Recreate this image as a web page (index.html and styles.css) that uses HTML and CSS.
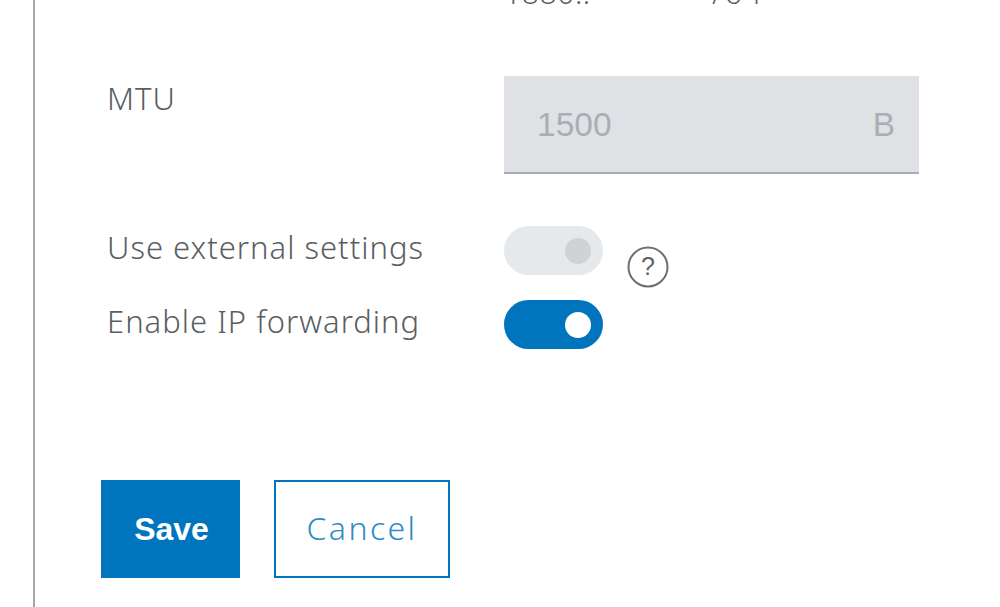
FILE: index.html
```html
<!DOCTYPE html>
<html lang="en">
<head>
<meta charset="utf-8">
<title>Network settings</title>
<link rel="stylesheet" href="styles.css">
</head>
<body>
<main class="panel">
  <div class="clip-row">
    <span class="addr">1880::</span>
    <span class="prefix">/64</span>
  </div>
  <div class="form-row mtu-row">
    <label class="label">MTU</label>
    <div class="input">
      <span>1500</span>
      <span>B</span>
    </div>
  </div>
  <div class="form-row toggle-row first-toggle">
    <span class="label">Use external settings</span>
    <span class="toggle toggle-off"><span class="knob"></span></span>
    <svg class="help" width="42" height="42" viewBox="0 0 42 42" aria-label="Help">
      <circle cx="21" cy="21" r="19.5" fill="none" stroke="#6a6e73" stroke-width="2"/>
      <text x="21" y="29" text-anchor="middle" class="help-mark">?</text>
    </svg>
  </div>
  <div class="form-row toggle-row second-toggle">
    <span class="label">Enable IP forwarding</span>
    <span class="toggle toggle-on"><span class="knob"></span></span>
  </div>
  <div class="actions">
    <button class="btn btn-primary" type="button">Save</button>
    <button class="btn btn-secondary" type="button">Cancel</button>
  </div>
</main>
</body>
</html>
```
FILE: styles.css
```css
html, body {
  margin: 0;
  height: 607px;
  overflow: hidden;
  background: #fff;
}
body {
  font-family: "Noto Sans", "Open Sans", sans-serif;
  font-weight: 300;
  color: #5a5e63;
}
.panel {
  margin-left: 33px;
  height: 607px;
  border-left: 2px solid #a5a9ae;
  padding-left: 72px;
  box-sizing: border-box;
  overflow: hidden;
}
.clip-row {
  height: 13px;
  display: flex;
  align-items: flex-end;
  padding-left: 397px;
  font-size: 30px;
  line-height: 40px;
  letter-spacing: 0.6px;
}
.addr { width: 206px; flex: none; margin-right: 2px; }
.prefix { letter-spacing: 2.4px; }
.form-row {
  display: flex;
  align-items: flex-start;
}
.label {
  width: 397px;
  flex: none;
  font-size: 31px;
  line-height: 40px;
  letter-spacing: 1px;
}
.mtu-row { margin-top: 63px; }
.mtu-row .label { margin-top: 2px; }
.input {
  width: 415px;
  height: 98px;
  box-sizing: border-box;
  background: #dfe1e5;
  border-bottom: 2px solid #a5acb5;
  display: flex;
  justify-content: space-between;
  align-items: center;
  padding: 1px 24px 0 33px;
  color: #a9aeb4;
  font-family: "Liberation Sans", sans-serif;
  font-weight: 400;
  font-size: 33.5px;
}
.first-toggle { margin-top: 52px; }
.second-toggle { margin-top: 12px; }
.toggle-row .label { margin-top: 1px; }
.toggle {
  width: 99px;
  height: 49px;
  border-radius: 25px;
  flex: none;
  display: flex;
  align-items: center;
  justify-content: flex-end;
  padding-right: 12px;
  box-sizing: border-box;
}
.knob {
  width: 26px;
  height: 26px;
  border-radius: 50%;
}
.toggle-off { background: #e6e9ec; }
.toggle-off .knob { background: #d0d2d5; }
.toggle-on { background: #0075be; }
.toggle-on .knob { background: #fff; }
.help {
  flex: none;
  margin: 20px 0 0 24px;
}
.help-mark {
  font-family: "Liberation Sans", sans-serif;
  font-size: 25px;
  fill: #5f6368;
}
.actions {
  display: flex;
  gap: 34px;
  margin-top: 131px;
  margin-left: -6px;
}
.btn {
  height: 98px;
  box-sizing: border-box;
  border-radius: 0;
}
.btn-primary {
  width: 139px;
  padding: 0 0 0 2px;
  background: #0075be;
  border: 0;
  color: #fff;
  font-family: "Liberation Sans", sans-serif;
  font-weight: 700;
  font-size: 32px;
}
.btn-secondary {
  width: 176px;
  padding: 0 0 4px;
  background: #fff;
  border: 2px solid #0075be;
  color: #2d8bc9;
  font-family: "Noto Sans", sans-serif;
  font-weight: 300;
  font-size: 32px;
  letter-spacing: 2.4px;
}
```
